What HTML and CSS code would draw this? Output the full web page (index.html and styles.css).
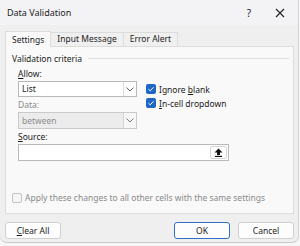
FILE: index.html
```html
<!doctype html>
<html>
<head>
    <meta charset="utf-8">
    <title>Data Validation</title>
    <link rel="stylesheet" href="styles.css">
</head>
<body>
    <div class="window">
        <header class="titlebar">
            <span class="title">Data Validation</span>
            <span class="help">?</span>
            <svg class="close" width="10" height="10" viewBox="0 0 10 10">
                <path d="M1 1L9 9M9 1L1 9" stroke="#222" stroke-width="1.1" fill="none"/>
            </svg>
        </header>

        <nav class="tabs">
            <span class="tab active">Settings</span>
            <span class="tab">Input Message</span>
            <span class="tab">Error Alert</span>
        </nav>

        <section class="panel">
            <div class="legend">
                <span>Validation criteria</span>
                <span class="rule"></span>
            </div>

            <div class="criteria">
                <div class="field">
                    <label><u>A</u>llow:</label>
                    <div class="combo">
                        <span class="value">List</span>
                        <span class="arrow">
                            <svg width="8" height="5" viewBox="0 0 8 5"><path d="M0.5 0.5L4 4L7.5 0.5" stroke="#666" fill="none"/></svg>
                        </span>
                    </div>
                    <label class="muted">Data:</label>
                    <div class="combo disabled">
                        <span class="value">between</span>
                        <span class="arrow">
                            <svg width="8" height="5" viewBox="0 0 8 5"><path d="M0.5 0.5L4 4L7.5 0.5" stroke="#777" fill="none"/></svg>
                        </span>
                    </div>
                </div>
                <div class="checks">
                    <div class="check">
                        <span class="box on">
                            <svg width="8" height="8" viewBox="0 0 8 8"><path d="M1.5 4.2L3.2 5.8L6.6 2.2" stroke="#fff" stroke-width="1" fill="none"/></svg>
                        </span>
                        <span>Ignore <u>b</u>lank</span>
                    </div>
                    <div class="check">
                        <span class="box on">
                            <svg width="8" height="8" viewBox="0 0 8 8"><path d="M1.5 4.2L3.2 5.8L6.6 2.2" stroke="#fff" stroke-width="1" fill="none"/></svg>
                        </span>
                        <span><u>I</u>n-cell dropdown</span>
                    </div>
                </div>
            </div>

            <label class="source-label"><u>S</u>ource:</label>
            <div class="source">
                <span class="input"></span>
                <span class="pick">
                    <svg width="9" height="9" viewBox="0 0 9 9"><path d="M4.5 0.5L8.5 4.5H6V7H3V4.5H0.5Z" fill="#111"/><rect x="1" y="7.8" width="7" height="1.2" fill="#111"/></svg>
                </span>
            </div>

            <div class="apply">
                <span class="box off"></span>
                <span>Apply these changes to all other cells with the same settings</span>
            </div>
        </section>

        <footer class="buttons">
            <button class="btn"><u>C</u>lear All</button>
            <span class="spacer"></span>
            <button class="btn primary">OK</button>
            <button class="btn">Cancel</button>
        </footer>
    </div>
</body>
</html>
```

FILE: styles.css
```css
html {
    background: #f6f6f6;
}

body {
    margin: 0;
    font-family: "Noto Sans", "Open Sans", sans-serif;
    font-size: 8.5px;
    color: #1b1b1b;
}

u {
    text-decoration-thickness: 1px;
    text-underline-offset: 1px;
}

.window {
    width: 298px;
    height: 242px;
    background: #efefef;
    border-right: 1px solid #d6d6d6;
    border-bottom: 1px solid #c9c9c9;
    border-radius: 0 0 7px 7px;
    display: flex;
    flex-direction: column;
}

.titlebar {
    height: 25px;
    background: #f3f3f6;
    display: flex;
    align-items: center;
    padding-left: 7px;
}

.title {
    font-size: 9px;
    flex: 1;
}

.help {
    font-size: 10px;
    margin-right: 24px;
}

.close {
    margin-right: 13px;
}

.tabs {
    display: flex;
    align-items: flex-end;
    padding: 6px 0 0 5px;
    height: 15px;
}

.tab {
    height: 13px;
    line-height: 12px;
    padding: 0 6px;
    border: 1px solid #dcdcdc;
    border-bottom: none;
    margin-left: -1px;
    background: #f0f0f0;
}

.tab.active {
    height: 15px;
    line-height: 15px;
    margin-left: 0;
    padding: 0 6px;
    background: #f9f9f9;
    position: relative;
    z-index: 1;
    margin-bottom: -1px;
}

.panel {
    margin: 0 4px 0 5px;
    height: 160px;
    background: #f9f9f9;
    border: 1px solid #dcdcdc;
    padding: 6px 0 0 12px;
}

.legend {
    display: flex;
    align-items: center;
    padding-left: 6px;
    margin-left: -12px;
    padding-right: 4px;
}

.legend .rule {
    flex: 1;
    height: 1px;
    background: #dedede;
    margin-left: 6px;
    margin-top: -1px;
}

.criteria {
    display: flex;
    margin-top: 2px;
}

.field {
    width: 119px;
    display: flex;
    flex-direction: column;
}

label {
    display: block;
    height: 15px;
    line-height: 15px;
}

.muted {
    color: #8a8a8a;
}

.combo {
    height: 16px;
    border: 1px solid #b9b9b9;
    background: #fff;
    display: flex;
    box-sizing: border-box;
}

.combo .value {
    flex: 1;
    line-height: 14px;
    padding-left: 3px;
}

.combo .arrow {
    width: 12px;
    border-left: 1px solid #dcdcdc;
    display: flex;
    align-items: center;
    justify-content: center;
}

.combo.disabled {
    height: 17px;
    background: #ececec;
    border-color: #cacaca;
    color: #8d8d8d;
}

.combo.disabled .value {
    line-height: 15px;
}

.combo.disabled .arrow {
    background: #f7f7f7;
    border-left-color: #d6d6d6;
}

.checks {
    margin-left: 9px;
    padding-top: 16px;
}

.check {
    display: flex;
    align-items: center;
    height: 14px;
}

.box {
    width: 10px;
    height: 10px;
    border-radius: 2px;
    box-sizing: border-box;
    margin-right: 3px;
    display: flex;
    align-items: center;
    justify-content: center;
}

.box.on {
    background: #1e67c8;
}

.box.off {
    border: 1px solid #c4c4c4;
    background: #f5f5f5;
}

.source {
    width: 211px;
    height: 17px;
    box-sizing: border-box;
    border: 1px solid #b9b9b9;
    background: #fff;
    display: flex;
    justify-content: flex-end;
    padding: 1px;
}

.source .input {
    flex: 1;
}

.source .pick {
    width: 15px;
    border: 1px solid #d6d6d6;
    border-radius: 2px;
    display: flex;
    align-items: center;
    justify-content: center;
}

.apply {
    display: flex;
    align-items: center;
    color: #8a8a8a;
    margin: 31px 0 0 -6px;
}

.buttons {
    display: flex;
    padding: 8px 4px 0 5px;
    gap: 8px;
}

.spacer {
    flex: 1;
}

.btn {
    width: 56px;
    height: 17px;
    font: inherit;
    color: #1b1b1b;
    background: #fdfdfd;
    border: 1px solid #d0d0d0;
    border-radius: 3px;
    padding: 0;
}

.btn.primary {
    border: 1.5px solid #2e6fc7;
}
```
